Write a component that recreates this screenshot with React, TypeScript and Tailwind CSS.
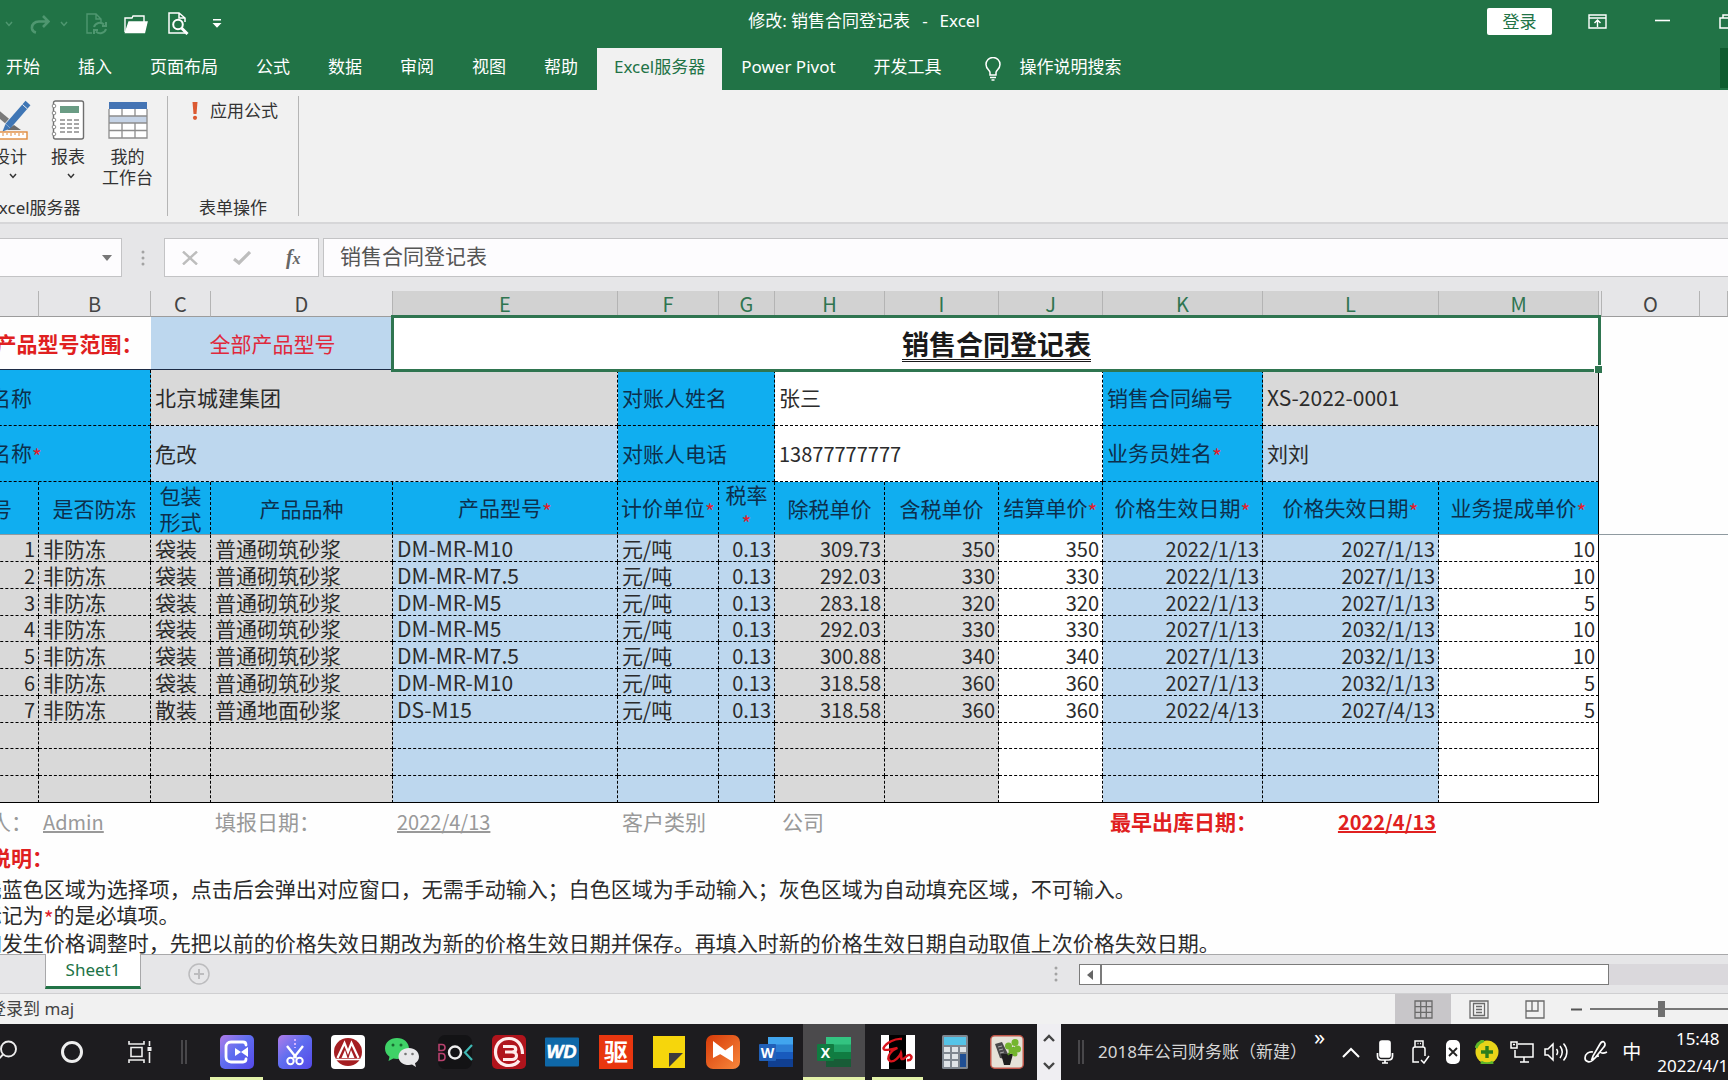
import type { ReactNode } from "react";
import clsx from "clsx";

/* ---------- small shared pieces ---------- */

const Star = () => <span className="align-[-4px] leading-none text-[#e0202c]">*</span>;

function Chevron({ className }: { className?: string }) {
  return (
    <svg viewBox="0 0 8 6" className={clsx("h-[6px] w-[8px]", className)} fill="none" stroke="currentColor" strokeWidth="1.5">
      <path d="M1 1l3 3.4L7 1" />
    </svg>
  );
}

/* ---------- title bar ---------- */

function QuickAccess() {
  return (
    <div className="flex h-full items-center text-white">
      <button aria-label="撤消选项" className="ml-[5px] text-[#4f9770]">
        <Chevron />
      </button>
      <button aria-label="重做" className="ml-[17px] text-[#4f9770]">
        <svg viewBox="0 0 20 20" className="size-5" fill="none" stroke="currentColor" strokeWidth="2.6">
          <path d="M13 2l5.5 5.5L13 13M18 7.5H9C4.500 7.500 1.500 10.500 2 14.500c.3 2 1.500 3.500 4 4" />
        </svg>
      </button>
      <button aria-label="重做选项" className="ml-2.5 text-[#4f9770]">
        <Chevron />
      </button>
      <button aria-label="刷新" className="ml-[18px] text-[#4f9770]">
        <svg viewBox="0 0 22 22" className="size-[22px]" fill="none" stroke="currentColor" strokeWidth="1.4">
          <path d="M6 20H1V1h9l5 5v3M10 1v5h5" />
          <path d="M8 14a6 6 0 0110-2.500M20 9v4h-4M20 16a6 6 0 01-10 2.500M8 21v-4h4" strokeWidth="2" />
        </svg>
      </button>
      <button aria-label="打开" className="ml-4">
        <svg viewBox="0 0 24 20" className="h-5 w-6" fill="none" stroke="currentColor" strokeWidth="1.4">
          <path d="M1 18V4h7l1-2h11v6" />
          <path d="M1.500 18.500L5 8h18l-2.500 10.500z" fill="currentColor" />
        </svg>
      </button>
      <button aria-label="打印预览" className="ml-5">
        <svg viewBox="0 0 21 23" className="h-[23px] w-[21px]" fill="none" stroke="currentColor" strokeWidth="1.5">
          <path d="M17 21H1V1h10l6 5v4M11 1v5h6" />
          <circle cx="10" cy="12.500" r="4.800" strokeWidth="2" />
          <path d="M13.500 16l6 6" strokeWidth="3" />
        </svg>
      </button>
      <button aria-label="自定义快速访问工具栏" className="ml-[23px]">
        <svg viewBox="0 0 10 9" className="h-[9px] w-[10px]" fill="currentColor">
          <path d="M1 0h8v1.600H1zM0.500 4h9L5 8.800z" />
        </svg>
      </button>
    </div>
  );
}

function TitleBar() {
  return (
    <div className="grid h-[47px] grid-cols-[1fr_auto_1fr]">
      <QuickAccess />
      <div className="flex gap-3 pt-[11px] text-[17px] leading-5 text-white">
        <span>修改: 销售合同登记表</span>
        <span>-</span>
        <span>Excel</span>
      </div>
      <div className="-mr-3 flex items-start justify-end text-white">
        <button className="mt-2 h-[27px] w-[65px] rounded-[2px] bg-white text-[17px] leading-6 text-[#217346]">登录</button>
        <button aria-label="功能区显示选项" className="mt-3.5 ml-9">
          <svg viewBox="0 0 19 15" className="h-[15px] w-[19px]" fill="none" stroke="currentColor" strokeWidth="1.4">
            <path d="M1 1h17v13H1zM1 4h17M9.500 13V6.500M6.500 9l3-3 3 3" />
          </svg>
        </button>
        <button aria-label="最小化" className="mt-3.5 ml-12">
          <svg viewBox="0 0 15 15" className="size-[15px]" stroke="currentColor" strokeWidth="1.6">
            <path d="M0 6.500h15" />
          </svg>
        </button>
        <button aria-label="还原" className="mt-3.5 ml-[49px]">
          <svg viewBox="0 0 21 15" className="h-[15px] w-[21px]" fill="none" stroke="currentColor" strokeWidth="1.500">
            <path d="M1 4h13v10H1zM4 4V1h13v10h-3" />
          </svg>
        </button>
      </div>
    </div>
  );
}

/* ---------- ribbon ---------- */

const tabs = ["开始", "插入", "页面布局", "公式", "数据", "审阅", "视图", "帮助", "Excel服务器", "Power Pivot", "开发工具"];

function RibbonTabs() {
  return (
    <div className="flex h-[43px] justify-between text-[17px] leading-5">
      <nav className="-ml-[13px] flex pt-px">
        {tabs.map((t) => (
          <button
            key={t}
            className={clsx(
              "pb-1 whitespace-nowrap",
              t === "Excel服务器" ? "bg-[#f1f1f1] px-[17px] text-[#217346]" : "px-[19px] text-white",
            )}
          >
            {t}
          </button>
        ))}
        <button className="flex items-center gap-[19px] pb-1 pl-6 whitespace-nowrap text-white">
          <svg viewBox="0 0 16 24" className="mt-1 h-6 w-4" fill="none" stroke="currentColor" strokeWidth="1.500">
            <path d="M5 18v-2.500c0-2-4-3.500-4-8a7 7 0 0114 0c0 4.500-4 6-4 8V18zM5 20.500h6M6.500 23h3" />
          </svg>
          操作说明搜索
        </button>
      </nav>
      <div className="mt-px mb-0.5 w-2 bg-[#0e5c2f]" />
    </div>
  );
}

function DesignIcon() {
  return (
    <svg viewBox="0 0 44 40" className="h-10 w-11" fill="none">
      <path d="M6 10l13 11" stroke="#7a7a7a" strokeWidth="6" />
      <path d="M19 30l7-5 7 5z" fill="#6b6b6b" />
      <path d="M40 3L20 26" stroke="#3f76b5" strokeWidth="6.500" />
      <path d="M34.500 4.500l5 4.500" stroke="#f1f1f1" strokeWidth="1" />
      <path d="M17.500 24l5 4.500-8 3z" fill="#3f76b5" />
      <rect x="2" y="32" width="37" height="7" fill="#fff" stroke="#e08a3c" strokeWidth="1.400" />
      <path d="M7 33v3M11 33v2M15 33v3M19 33v2M23 33v3M27 33v2M31 33v3M35 33v2" stroke="#e08a3c" />
    </svg>
  );
}

function ReportIcon() {
  return (
    <svg viewBox="0 0 34 40" className="h-10 w-[34px]" fill="none">
      <rect x="2.500" y="1" width="30" height="38" rx="2" fill="#fff" stroke="#6f6f6f" strokeWidth="1.400" />
      <rect x="9" y="6" width="19" height="7" fill="#6a9c84" />
      <path d="M9 20h19M9 24h19M9 28h19M9 32h19" stroke="#8a8a8a" strokeWidth="1.300" strokeDasharray="5 2" />
      <g fill="#fff" stroke="#8a8a8a">
        <circle cx="3" cy="6" r="1.800" />
        <circle cx="3" cy="13" r="1.800" />
        <circle cx="3" cy="20" r="1.800" />
        <circle cx="3" cy="27" r="1.800" />
        <circle cx="3" cy="34" r="1.800" />
      </g>
    </svg>
  );
}

function DeskIcon() {
  return (
    <svg viewBox="0 0 40 40" className="size-10" fill="none">
      <rect x="1" y="3" width="38" height="35" fill="#fff" />
      <rect x="1" y="2" width="38" height="7" fill="#4474b4" />
      <rect x="1" y="16" width="38" height="7" fill="#c5d3e6" />
      <path d="M1 9v29h38V9M1 16h38M1 23h38M1 30.500h38M14 9v7M27 9v7M14 23v15M27 23v15" stroke="#8d8d8d" strokeWidth="1.300" />
    </svg>
  );
}

function RibbonButton({ icon, children, className }: { icon: ReactNode; children: ReactNode; className: string }) {
  return (
    <button className={clsx("flex flex-col items-center pt-1", className)}>
      {icon}
      <span className="mt-1.5 flex flex-col items-center leading-[21px]">{children}</span>
    </button>
  );
}

function Ribbon() {
  return (
    <div className="flex h-[134px] border-b-2 border-[#d6d6d8] bg-[#f1f1f1] py-1.5 text-[17px] whitespace-nowrap text-[#333]">
      <section className="-ml-[97px] flex w-[265px] flex-col justify-between border-r border-[#b5b5b5]">
        <div className="flex justify-end pr-2">
          <RibbonButton icon={<DesignIcon />} className="w-[60px]">
            设计
            <Chevron className="mt-1.5 ml-1.5" />
          </RibbonButton>
          <RibbonButton icon={<ReportIcon />} className="w-14">
            报表
            <Chevron className="mt-1.5 ml-1.5" />
          </RibbonButton>
          <RibbonButton icon={<DeskIcon />} className="w-[63px]">
            <span>我的</span>
            <span>工作台</span>
          </RibbonButton>
        </div>
        <div className="text-center leading-4">Excel服务器</div>
      </section>
      <section className="flex w-[131px] flex-col justify-between border-r border-[#b5b5b5]">
        <button className="flex items-center gap-3 pt-1 pl-6 leading-[21px]">
          <svg viewBox="0 0 6 18" className="h-[18px] w-1.5" fill="#dc5a32">
            <path d="M0.500 0h5l-1 12h-3z" />
            <circle cx="3" cy="15.800" r="2.100" />
          </svg>
          应用公式
        </button>
        <div className="text-center leading-4">表单操作</div>
      </section>
    </div>
  );
}

/* ---------- formula bar ---------- */

function Grip() {
  return (
    <svg viewBox="0 0 4 16" className="h-4 w-1" fill="#a3a3a3">
      <circle cx="2" cy="2" r="1.500" />
      <circle cx="2" cy="8" r="1.500" />
      <circle cx="2" cy="14" r="1.500" />
    </svg>
  );
}

function FormulaBar() {
  return (
    <div className="flex h-[67px] items-start bg-[#e6e6e8] pt-3.5">
      <div className="flex h-[39px] w-[122px] items-center border border-l-0 border-[#c3c3c5] bg-[#fdfcfe]">
        <input aria-label="名称框" className="h-full w-[98px] bg-transparent pl-2 outline-none" />
        <button aria-label="名称列表">
          <svg viewBox="0 0 10 6" className="ml-1 h-1.5 w-2.5" fill="#777">
            <path d="M0 0h10L5 6z" />
          </svg>
        </button>
      </div>
      <div className="flex h-[39px] w-[42px] items-center justify-center">
        <Grip />
      </div>
      <div className="flex h-[39px] w-[155px] items-center justify-around border border-[#c3c3c5] bg-[#fdfcfe]">
        <button aria-label="取消">
          <svg viewBox="0 0 16 14" className="h-3.5 w-4" stroke="#bdbdbd" strokeWidth="2.400">
            <path d="M1 0.500l14 13M15 0.500l-14 13" />
          </svg>
        </button>
        <button aria-label="输入">
          <svg viewBox="0 0 18 14" className="h-3.5 w-[18px]" fill="none" stroke="#bdbdbd" strokeWidth="3.200">
            <path d="M1 8l5 4L17 1" />
          </svg>
        </button>
        <button aria-label="插入函数" className="font-['Liberation_Serif',serif] text-xl leading-6 font-bold text-[#666] italic">
          f<span className="text-base">x</span>
        </button>
      </div>
      <input
        aria-label="编辑栏"
        defaultValue="销售合同登记表"
        className="ml-1 h-[39px] min-w-0 flex-1 border border-r-0 border-[#c3c3c5] bg-[#fdfcfe] pb-1.5 pl-4 text-[21px] text-[#555] outline-none"
      />
    </div>
  );
}

/* ---------- worksheet ---------- */

const columns = [
  { name: "A", width: "w-[95px]" },
  { name: "B", width: "w-[112px]" },
  { name: "C", width: "w-[60px]" },
  { name: "D", width: "w-[182px]" },
  { name: "E", width: "w-[225px]", active: true },
  { name: "F", width: "w-[101px]", active: true },
  { name: "G", width: "w-[56px]", active: true },
  { name: "H", width: "w-[110px]", active: true },
  { name: "I", width: "w-[114px]", active: true },
  { name: "J", width: "w-[104px]", active: true },
  { name: "K", width: "w-[160px]", active: true },
  { name: "L", width: "w-[176px]", active: true },
  { name: "M", width: "w-[160px]", active: true },
  { name: "", width: "w-[3px]" },
  { name: "O", width: "w-[98px]" },
  { name: "", width: "w-auto" },
];

const rows = [
  ["1", "非防冻", "袋装", "普通砌筑砂浆", "DM-MR-M10", "元/吨", "0.13", "309.73", "350", "350", "2022/1/13", "2027/1/13", "10"],
  ["2", "非防冻", "袋装", "普通砌筑砂浆", "DM-MR-M7.5", "元/吨", "0.13", "292.03", "330", "330", "2022/1/13", "2027/1/13", "10"],
  ["3", "非防冻", "袋装", "普通砌筑砂浆", "DM-MR-M5", "元/吨", "0.13", "283.18", "320", "320", "2022/1/13", "2027/1/13", "5"],
  ["4", "非防冻", "袋装", "普通砌筑砂浆", "DM-MR-M5", "元/吨", "0.13", "292.03", "330", "330", "2027/1/13", "2032/1/13", "10"],
  ["5", "非防冻", "袋装", "普通砌筑砂浆", "DM-MR-M7.5", "元/吨", "0.13", "300.88", "340", "340", "2027/1/13", "2032/1/13", "10"],
  ["6", "非防冻", "袋装", "普通砌筑砂浆", "DM-MR-M10", "元/吨", "0.13", "318.58", "360", "360", "2027/1/13", "2032/1/13", "5"],
  ["7", "非防冻", "散装", "普通地面砂浆", "DS-M15", "元/吨", "0.13", "318.58", "360", "360", "2022/4/13", "2027/4/13", "5"],
  Array(13).fill(""),
  Array(13).fill(""),
  Array(13).fill(""),
];

const grey = "bg-[#d9d9d9]";
const pale = "bg-[#bdd7ee]";
const fills = [grey, grey, grey, grey, pale, pale, pale, grey, grey, "bg-white", pale, pale, "bg-white"];
const numeric = [0, 6, 7, 8, 9, 10, 11, 12];

const dashed = "border-r border-b border-dashed border-black";
const lastCol = "border-r border-b border-dashed border-black [border-right-style:solid]";
const label = "bg-[#10aef0] text-[#0d2f4c]";

function Worksheet() {
  return (
    <main className="min-h-0 flex-1 overflow-hidden bg-[#fefefe] text-[21px] leading-[25px] text-[#2b2b2b]">
      <table className="-ml-14 w-[calc(100%+56px)] table-fixed border-separate border-spacing-0 text-left whitespace-nowrap [&_td]:pl-1 [&_td]:pr-[3px]">
        <colgroup>
          {columns.map((c, i) => (
            <col key={i} className={c.width} />
          ))}
        </colgroup>
        <thead>
          <tr className="h-[26px]">
            {columns.map((c, i) => (
              <th
                key={i}
                className={clsx(
                  "border-r border-b border-r-[#b4b4b4] border-b-[#9c9c9c] p-0 text-center text-xl/[25px] font-normal",
                  c.active ? "bg-[#d2d2d2] text-[#2f7550]" : "bg-[#e6e6e8] text-[#444]",
                )}
              >
                {c.name}
              </th>
            ))}
          </tr>
        </thead>
        <tbody>
          <tr className="h-[53px] text-center">
            <td colSpan={2} className="border-b border-[#1c2b45] font-bold text-[#e02020]">
              可选产品型号范围：
            </td>
            <td colSpan={2} className={clsx("border-b border-[#1c2b45] text-[#e0283c]", pale)}>
              全部产品型号
            </td>
            <td colSpan={9} className="relative bg-white text-[27px] leading-8 font-bold text-[#1a1a1a]">
              <span className="underline decoration-double decoration-1 underline-offset-4">销售合同登记表</span>
              {/* selection frame with its fill handle */}
              <div className="pointer-events-none absolute -inset-0.5 border-3 border-[#2f7550]">
                <div className="absolute -right-1 -bottom-1 size-[8px] border-t border-l border-white bg-[#2f7550]" />
              </div>
            </td>
            <td colSpan={3} />
          </tr>
          <tr className="h-14">
            <td colSpan={2} className={clsx(dashed, label)}>客户名称</td>
            <td colSpan={3} className={clsx(dashed, grey)}>北京城建集团</td>
            <td colSpan={2} className={clsx(dashed, label)}>对账人姓名</td>
            <td colSpan={3} className={clsx(dashed, "bg-white")}>张三</td>
            <td className={clsx(dashed, label)}>销售合同编号</td>
            <td colSpan={2} className={clsx(lastCol, grey)}>XS-2022-0001</td>
            <td colSpan={3} />
          </tr>
          <tr className="h-14">
            <td colSpan={2} className={clsx(dashed, label)}>项目名称<Star /></td>
            <td colSpan={3} className={clsx(dashed, pale)}>危改</td>
            <td colSpan={2} className={clsx(dashed, label)}>对账人电话</td>
            <td colSpan={3} className={clsx(dashed, "bg-white text-xl/[25px]")}>13877777777</td>
            <td className={clsx(dashed, label)}>业务员姓名<Star /></td>
            <td colSpan={2} className={clsx(lastCol, pale)}>刘刘</td>
            <td colSpan={3} />
          </tr>
          <tr className="h-[53px] text-center [&>td]:border-r [&>td]:border-b [&>td]:border-dashed [&>td]:border-r-black [&>td]:border-b-[#8f9aa0] [&>td]:[border-bottom-style:solid] [&>td]:px-0!">
            <td className={label}>序号</td>
            <td className={label}>是否防冻</td>
            <td className={clsx(label, "leading-[26px]")}>包装<br />形式</td>
            <td className={label}>产品品种</td>
            <td className={label}>产品型号<Star /></td>
            <td className={label}>计价单位<Star /></td>
            <td className={label}>税率<br /><Star /></td>
            <td className={label}>除税单价</td>
            <td className={label}>含税单价</td>
            <td className={label}>结算单价<Star /></td>
            <td className={label}>价格生效日期<Star /></td>
            <td className={label}>价格失效日期<Star /></td>
            <td className={clsx(label, "[border-right-style:solid]!")}>业务提成单价<Star /></td>
            <td colSpan={3} className="border-r-0!" />
          </tr>
          {rows.map((r, y) => (
            <tr key={y} className={y % 4 === 3 ? "h-[26px]" : "h-[27px]"}>
              {r.map((v, x) => (
                <td
                  key={x}
                  className={clsx(
                    x === 12 ? lastCol : dashed,
                    fills[x],
                    numeric.includes(x) && "text-right text-xl/[25px]",
                    y === rows.length - 1 && "[border-bottom-style:solid]",
                  )}
                >
                  {v}
                </td>
              ))}
              <td colSpan={3} />
            </tr>
          ))}
          <tr className="h-9 text-[#999]">
            <td>填报人：</td>
            <td className="text-xl/[25px] underline">Admin</td>
            <td />
            <td>填报日期：</td>
            <td className="text-xl/[25px] underline">2022/4/13</td>
            <td colSpan={2}>客户类别</td>
            <td className="pl-[7px]!">公司</td>
            <td colSpan={2} />
            <td className="text-center font-bold text-[#e02020]">最早出库日期：</td>
            <td className="text-right text-xl/[25px] font-bold text-[#e02020] underline">2022/4/13</td>
            <td colSpan={4} />
          </tr>
          <tr className="h-9 font-bold text-[#e02020]">
            <td colSpan={16}>填写说明：</td>
          </tr>
          <tr className="h-[27px]">
            <td colSpan={16}>
              1、浅蓝色区域为选择项，点击后会弹出对应窗口，无需手动输入；白色区域为手动输入；灰色区域为自动填充区域，不可输入。
            </td>
          </tr>
          <tr className="h-[27px]">
            <td colSpan={16}>2、标记为<Star />的是必填项。</td>
          </tr>
          <tr className="h-[27px]">
            <td colSpan={16}>
              3、如发生价格调整时，先把以前的价格失效日期改为新的价格生效日期并保存。再填入时新的价格生效日期自动取值上次价格失效日期。
            </td>
          </tr>
        </tbody>
      </table>
    </main>
  );
}

/* ---------- sheet tabs and status bar ---------- */

function SheetBar() {
  return (
    <div className="flex h-[39px] items-start border-t border-[#a8a8aa] bg-[#e6e6e8]">
      <button className="-mt-px ml-[45px] h-[35px] w-24 border-r border-b-3 border-l border-r-[#a8a8aa] border-b-[#217346] border-l-[#a8a8aa] bg-white text-[17px] leading-5 text-[#217346]">
        Sheet1
      </button>
      <button aria-label="新工作表" className="mt-2 ml-[47px]">
        <svg viewBox="0 0 22 22" className="size-[22px]" fill="none" stroke="#bcbcbe" strokeWidth="1.500">
          <circle cx="11" cy="11" r="10" />
          <path d="M11 6v10M6 11h10" strokeWidth="2" />
        </svg>
      </button>
      <div className="mt-[11px] ml-auto">
        <Grip />
      </div>
      <div className="mt-[9px] ml-[21px] flex h-[21px] w-[649px] bg-[#dad8dc]">
        <button aria-label="向左滚动" className="flex w-[22px] items-center justify-center border border-[#7b7b7b] bg-white">
          <svg viewBox="0 0 6 10" className="h-2.5 w-1.5" fill="#666">
            <path d="M6 0v10L0 5z" />
          </svg>
        </button>
        <div className="w-[508px] border border-[#7b7b7b] bg-white" />
      </div>
    </div>
  );
}

function StatusBar() {
  return (
    <div className="flex h-[31px] items-center border-t border-[#cfcfd1] bg-[#f1f1f1] text-[#6a6a6a]">
      <span className="-ml-[11px] text-[17px] leading-5 text-[#444]">登录到 maj</span>
      <button aria-label="普通" className="ml-auto flex h-full w-14 items-center justify-center bg-[#c8c6c9]">
        <svg viewBox="0 0 19 19" className="size-[19px]" fill="none" stroke="currentColor" strokeWidth="1.300">
          <path d="M1 1h17v17H1zM1 6.700h17M1 12.300h17M6.700 1v17M12.300 1v17" />
        </svg>
      </button>
      <button aria-label="页面布局" className="ml-[18px]">
        <svg viewBox="0 0 20 19" className="h-[19px] w-5" fill="none" stroke="currentColor" strokeWidth="1.300">
          <path d="M1 1h18v17H1zM4.500 3.500h11v12h-11zM7 6.500h6M7 9.500h6M7 12.500h6" />
        </svg>
      </button>
      <button aria-label="分页预览" className="ml-9">
        <svg viewBox="0 0 20 19" className="h-[19px] w-5" fill="none" stroke="currentColor" strokeWidth="1.300">
          <path d="M1 1h18v17H1zM1 11h12V1M7 1v10" />
        </svg>
      </button>
      <button aria-label="缩小" className="ml-[26px]">
        <svg viewBox="0 0 11 11" className="size-[11px]" stroke="#555" strokeWidth="2">
          <path d="M0 5.500h11" />
        </svg>
      </button>
      <input
        type="range"
        aria-label="缩放"
        defaultValue={50}
        className="-mr-1 ml-2 h-4 w-[142px] appearance-none bg-[linear-gradient(#777,#777)] bg-[length:100%_2px] bg-center bg-no-repeat [&::-webkit-slider-thumb]:h-4 [&::-webkit-slider-thumb]:w-[7px] [&::-webkit-slider-thumb]:appearance-none [&::-webkit-slider-thumb]:bg-[#707070]"
      />
    </div>
  );
}

/* ---------- taskbar ---------- */

const svgApp = "size-[34px] overflow-visible";

function RecorderApp() {
  return (
    <svg viewBox="0 0 34 34" className={svgApp} fill="none">
      <defs>
        <linearGradient id="violet" x1="0" y1="0" x2="1" y2="1">
          <stop offset="0" stopColor="#b07be8" />
          <stop offset="0.450" stopColor="#5f6ef0" />
          <stop offset="1" stopColor="#5548e8" />
        </linearGradient>
      </defs>
      <rect width="34" height="34" rx="5" fill="url(#violet)" />
      <path d="M26 10c0-2-1.500-3-3-3H11c-3 0-5 2-5 5v10c0 3 2 5 5 5h12c1.500 0 3-1 3-3" stroke="#fff" strokeWidth="2.800" strokeLinecap="round" />
      <path d="M15 13l6 4-6 4zM28 12v10l-7-5z" fill="#fff" />
    </svg>
  );
}

function ScissorsApp() {
  return (
    <svg viewBox="0 0 34 34" className={svgApp} fill="none" stroke="#fff">
      <rect width="34" height="34" rx="5" fill="url(#violet)" stroke="none" />
      <path d="M17 4v9" strokeWidth="1.800" strokeDasharray="2 2" stroke="#e0b8ff" />
      <path d="M9 11l9.500 12M25 11l-9.500 12" strokeWidth="2.400" />
      <circle cx="12.500" cy="26" r="3.200" strokeWidth="2" />
      <circle cx="21.500" cy="26" r="3.200" strokeWidth="2" />
    </svg>
  );
}

function BankApp() {
  return (
    <svg viewBox="0 0 34 34" className={svgApp} fill="none">
      <rect width="34" height="34" rx="4" fill="#fff" />
      <circle cx="17" cy="17" r="14" fill="#a51e22" />
      <path d="M6.500 23L13.500 8l3.500 9 3.500-9 7 15" stroke="#fff" strokeWidth="2.200" />
      <path d="M10.500 23l3.500-8 2.500 8zM17.500 23l2.500-8 3.500 8z" fill="#fff" />
      <path d="M5 24.500h24" stroke="#fff" strokeWidth="1.600" />
    </svg>
  );
}

function WechatApp() {
  return (
    <svg viewBox="0 0 34 34" className={svgApp}>
      <path d="M12 3C5 3 0 7.500 0 13.500c0 3.500 1.700 6.300 4.500 8.200L3.500 26l4.800-2.500c1.200.3 2.500.5 3.700.5 7 0 12-4.700 12-10.500S19 3 12 3z" fill="#3fd267" />
      <circle cx="8" cy="10" r="1.500" fill="#186b30" />
      <circle cx="16" cy="10" r="1.500" fill="#186b30" />
      <path d="M24 13c-6 0-10.500 3.800-10.500 8.700S18 30 24 30c1 0 2-.1 3-.4l4 2.400-1-3.700c2.500-1.600 4-3.900 4-6.600C34 16.800 29.700 13 24 13z" fill="#e8e8ea" />
      <circle cx="20.500" cy="19" r="1.300" fill="#777" />
      <circle cx="27.500" cy="19" r="1.300" fill="#777" />
    </svg>
  );
}

function BokApp() {
  return (
    <svg viewBox="0 0 34 34" className={svgApp} fill="none">
      <rect width="34" height="34" rx="7" fill="#131315" />
      <path d="M1 9.500h3c4 0 4 6 0 6H1zM1 18.500h3c4 0 4 7 0 7H1z" stroke="#b8426e" strokeWidth="1.600" />
      <circle cx="17" cy="17.500" r="6" stroke="#eee" strokeWidth="2.400" />
      <path d="M34 10l-7 7.500 7 7.500" stroke="#3fb8b4" strokeWidth="2.200" />
    </svg>
  );
}

function RoundBApp() {
  return (
    <svg viewBox="0 0 34 34" className={svgApp} fill="none" stroke="#ffecec" strokeWidth="3.200">
      <rect width="34" height="34" rx="5" fill="#b0141c" stroke="none" />
      <path d="M11 11.500h9c5 0 5 5.500 0 5.500h-7M20 17c6 0 6 7.500 0 7.500h-9" />
      <path d="M30.500 19c0-9-5-15.500-13.500-15.500S3.500 9.500 3.500 17 9 30.500 17 30.500c5 0 8-2 10-5" />
    </svg>
  );
}

function WdApp() {
  return (
    <svg viewBox="0 0 34 34" className={svgApp}>
      <rect y="2.500" width="34" height="29" rx="1" fill="#0f68a8" />
      <text x="16.500" y="23" textAnchor="middle" className="font-['Liberation_Sans',sans-serif] text-[18px] font-bold italic" fill="#fff" stroke="#fff" strokeWidth="0.600">
        WD
      </text>
    </svg>
  );
}

function DriverApp() {
  return (
    <svg viewBox="0 0 34 34" className={svgApp}>
      <rect width="34" height="34" fill="#e8360f" />
      <text x="17" y="26" textAnchor="middle" className="text-[24px] font-bold" fill="#fff">
        驱
      </text>
    </svg>
  );
}

function NotesApp() {
  return (
    <svg viewBox="0 0 34 34" className={svgApp}>
      <path d="M1 1h32v32H1z" fill="#f6d60c" />
      <path d="M17 32V18h14z" fill="#3c3c3c" />
    </svg>
  );
}

function BowtieApp() {
  return (
    <svg viewBox="0 0 34 34" className={svgApp}>
      <defs>
        <linearGradient id="flame" x1="0" y1="0" x2="1" y2="1">
          <stop offset="0" stopColor="#d63a08" />
          <stop offset="1" stopColor="#f8883c" />
        </linearGradient>
      </defs>
      <rect width="34" height="34" rx="7" fill="url(#flame)" />
      <path d="M7 6l13 10-13 7zM27 10v17l-13-8z" fill="#fff" />
    </svg>
  );
}

function OfficeApp({ letter, tones }: { letter: string; tones: string[] }) {
  return (
    <svg viewBox="0 0 34 34" className={svgApp}>
      <rect x="9" y="2" width="25" height="8" fill={tones[0]} />
      <rect x="9" y="9.500" width="25" height="8" fill={tones[1]} />
      <rect x="9" y="17" width="25" height="8" fill={tones[2]} />
      <rect x="9" y="24" width="25" height="8" fill={tones[3]} />
      <rect x="0" y="9" width="17" height="17" rx="1" fill={tones[4]} />
      <text x="8.500" y="22.500" textAnchor="middle" className="font-['Open_Sans',sans-serif] text-[14px] font-bold" fill="#fff">
        {letter}
      </text>
    </svg>
  );
}

function ScribbleApp() {
  return (
    <svg viewBox="0 0 34 34" className={svgApp} fill="none">
      <rect width="34" height="34" fill="#fff" />
      <rect x="8" width="17" height="34" fill="#000" />
      <path d="M21 4C14 3 5 8 2.500 13c-1 3 7 2 14 0C9 16 5 23 9 26c4 2 10-5 11-8 1 3-1 7 2 6 3-1 4-5 7-4 3 2 1 6-3 5" stroke="#d8141c" strokeWidth="2.400" />
    </svg>
  );
}

function CalculatorApp() {
  return (
    <svg viewBox="0 0 26 34" className="h-[34px] w-[26px]">
      <rect width="26" height="34" rx="1.500" fill="#7f8790" />
      <rect x="2" y="2" width="22" height="8" fill="#55c4e8" />
      <g fill="#dfe4e8">
        <rect x="2" y="12" width="6" height="5" />
        <rect x="10" y="12" width="6" height="5" />
        <rect x="18" y="12" width="6" height="5" />
        <rect x="2" y="19" width="6" height="5" />
        <rect x="10" y="19" width="6" height="5" />
        <rect x="2" y="26" width="6" height="6" />
        <rect x="10" y="26" width="6" height="6" />
      </g>
      <rect x="18" y="19" width="6" height="13" fill="#1f4f94" />
    </svg>
  );
}

function PlantApp() {
  return (
    <svg viewBox="0 0 34 34" className={svgApp}>
      <rect x="0.750" y="0.750" width="32.500" height="32.500" rx="4" fill="#e6e2d8" stroke="#c0574a" strokeWidth="1.500" />
      <path d="M5 9l7-2 6 12-3 5-5-1z" fill="#4a4a4a" />
      <path d="M8 12l4-1M9 15l4-1M10 18l4-1" stroke="#aaa" />
      <path d="M11 19h12l-3 11h-6z" fill="#1e1e1e" />
      <path d="M18 20l6-8" stroke="#4f8a1c" strokeWidth="2" />
      <g fill="#74b52e">
        <circle cx="18.500" cy="11" r="3.500" />
        <circle cx="25" cy="7.500" r="3.500" />
        <circle cx="27.500" cy="14" r="3.500" />
        <circle cx="22" cy="15.500" r="3.500" />
        <circle cx="25" cy="19" r="2.500" />
      </g>
    </svg>
  );
}

const pinned = [
  { name: "剪辑", icon: <ScissorsApp /> },
  { name: "招商银行", icon: <BankApp /> },
  { name: "微信", icon: <WechatApp /> },
  { name: "BOK", icon: <BokApp /> },
  { name: "B", icon: <RoundBApp /> },
  { name: "WD", icon: <WdApp /> },
  { name: "驱动", icon: <DriverApp /> },
  { name: "便笺", icon: <NotesApp /> },
  { name: "播放器", icon: <BowtieApp /> },
  { name: "Word", icon: <OfficeApp letter="W" tones={["#41a5ee", "#2b7cd3", "#185abd", "#103f91", "#2160b8"]} /> },
];

const running = "border-b-3 border-[#e3f2a9] pt-[3px]";

function Tray() {
  return (
    <div className="ml-auto flex items-center text-white">
      <button aria-label="更多工具栏" className="-mt-8 text-[22px] leading-6">»</button>
      <button aria-label="显示隐藏的图标" className="ml-[17px]">
        <svg viewBox="0 0 18 11" className="h-[11px] w-[18px]" fill="none" stroke="currentColor" strokeWidth="2">
          <path d="M1 10l8-8 8 8" />
        </svg>
      </button>
      <svg viewBox="0 0 18 24" className="ml-4 h-6 w-[18px]" fill="none" stroke="currentColor" strokeWidth="1.700">
        <rect x="4" y="1" width="10" height="16" rx="2" fill="currentColor" />
        <path d="M1.500 13v3c0 3 2 4 4 4h7c2 0 4-1 4-4v-3M9 20v3M6 23h6" />
      </svg>
      <svg viewBox="0 0 19 24" className="ml-[17px] h-6 w-[19px]" fill="none" stroke="currentColor" strokeWidth="1.500">
        <path d="M4 7V1h8v6M6.500 3.500h1M9 3.500h1M8 22H2V9c0-1 1-2 2-2h8c1 0 2 1 2 2v7" />
        <path d="M10 20l3 3 5-7" />
      </svg>
      <svg viewBox="0 0 14 24" className="ml-4 h-6 w-3.5">
        <rect width="14" height="24" rx="5" fill="#fff" />
        <path d="M3 8l8 8M11 8l-8 8" stroke="#222" strokeWidth="1.800" />
      </svg>
      <svg viewBox="0 0 24 24" className="ml-[15px] size-6">
        <circle cx="12" cy="12" r="11.500" fill="#e9d419" />
        <path d="M1 8a11.500 11.500 0 018-7.500M6 22a11.500 11.500 0 0012 0" stroke="#5cb52a" strokeWidth="3" fill="none" />
        <path d="M12 6v12M6 12h12" stroke="#2b7d1c" strokeWidth="3.400" />
      </svg>
      <svg viewBox="0 0 24 22" className="ml-[11px] h-[22px] w-6" fill="none" stroke="currentColor" strokeWidth="1.500">
        <path d="M8 3h15v13H5V9M10 21h9M14 16v5M1 1h6v6H1zM3 3.500h2" />
      </svg>
      <svg viewBox="0 0 24 20" className="ml-2.5 h-5 w-6" fill="none" stroke="currentColor" strokeWidth="1.500">
        <path d="M1 7h3l5-5v16l-5-5H1zM12.500 7c1.500 2 1.500 4 0 6M16 4c3 4 3 8 0 12M19.500 1.500c4.500 5 4.500 12 0 17" />
      </svg>
      <svg viewBox="0 0 24 24" className="ml-4 size-6" fill="none" stroke="currentColor" strokeWidth="1.700">
        <path d="M20 2c2 2 1 4-1 6l-8 10-3 1 1-3 7-12c1-2 3-3 4-2zM9 12c-4-1-8 2-8 6s5 5 8 2c2-2 3-4 6-4M16 12c2 2 5 1 7 0" />
      </svg>
      <span className="ml-3.5 text-[19px] leading-6">中</span>
      <div className="-mr-2.5 ml-4 flex flex-col items-center text-[17px] leading-[27px]">
        <span>15:48</span>
        <span>2022/4/13</span>
      </div>
    </div>
  );
}

function Taskbar() {
  return (
    <footer className="flex h-14 items-stretch bg-[#1d1c1f] text-white">
      <button aria-label="搜索">
        <svg viewBox="0 0 26 26" className="-ml-[7px] size-[26px]" fill="none" stroke="#eee" strokeWidth="1.900">
          <circle cx="15.500" cy="10" r="7.500" />
          <path d="M10 15.500L2 24" />
        </svg>
      </button>
      <button aria-label="Cortana" className="ml-[41px]">
        <svg viewBox="0 0 24 24" className="size-6" fill="none" stroke="#eee" strokeWidth="3">
          <circle cx="12" cy="12" r="9.500" />
        </svg>
      </button>
      <button aria-label="任务视图" className="ml-[44px]">
        <svg viewBox="0 0 24 24" className="size-6" fill="none" stroke="#eee" strokeWidth="1.600">
          <path d="M1 1v3h15V1M1 23v-3h15v3M3 7.500h11v9H3zM21.500 1v5M21.500 12v11" />
          <path d="M19.500 7h4v4h-4z" fill="#eee" stroke="none" />
        </svg>
      </button>
      <div className="my-auto ml-[29px] h-6 w-1.5 border-x-2 border-[#48474a]" />
      <div className="ml-[23px] flex w-[58px]">
        <button aria-label="录屏" className={clsx("flex w-[53px] items-center justify-center", running)}>
          <RecorderApp />
        </button>
      </div>
      <div className="grid w-[535px] grid-cols-10">
        {pinned.map((app) => (
          <button key={app.name} aria-label={app.name} className="flex items-center justify-center">
            {app.icon}
          </button>
        ))}
      </div>
      <button aria-label="Excel" className={clsx("flex w-[62px] items-center justify-center bg-[#4b4a4c]", running)}>
        <OfficeApp letter="X" tones={["#33c481", "#21a366", "#107c41", "#185c37", "#107c41"]} />
      </button>
      <button aria-label="画笔" className={clsx("ml-[7px] flex w-[51px] items-center justify-center", running)}>
        <ScribbleApp />
      </button>
      <button aria-label="计算器" className="ml-[19px]">
        <CalculatorApp />
      </button>
      <button aria-label="盆栽" className="ml-[22px]">
        <PlantApp />
      </button>
      <div className="ml-[13px] flex w-6 flex-col items-center justify-around bg-[#efeef2] text-[#444]">
        <button aria-label="上一行">
          <svg viewBox="0 0 12 8" className="h-2 w-3" fill="none" stroke="currentColor" strokeWidth="2.400">
            <path d="M1 7l5-5 5 5" />
          </svg>
        </button>
        <button aria-label="下一行">
          <svg viewBox="0 0 12 8" className="h-2 w-3" fill="none" stroke="currentColor" strokeWidth="2.400">
            <path d="M1 1l5 5 5-5" />
          </svg>
        </button>
      </div>
      <div className="my-auto ml-[17px] h-6 w-1.5 border-x-2 border-[#48474a]" />
      <span className="my-auto ml-3.5 text-[17px] leading-6 whitespace-nowrap text-[#d6d6d6]">2018年公司财务账（新建）</span>
      <Tray />
    </footer>
  );
}

export default function App() {
  return (
    <div className="flex h-screen flex-col overflow-hidden font-['Noto_Sans','Noto_Sans_CJK_SC',sans-serif]">
      <header className="bg-[#217346]">
        <TitleBar />
        <RibbonTabs />
      </header>
      <Ribbon />
      <div className="flex min-h-0 flex-1 flex-col font-['Noto_Sans_CJK_SC',sans-serif]">
        <FormulaBar />
        <Worksheet />
      </div>
      <SheetBar />
      <StatusBar />
      <Taskbar />
    </div>
  );
}
